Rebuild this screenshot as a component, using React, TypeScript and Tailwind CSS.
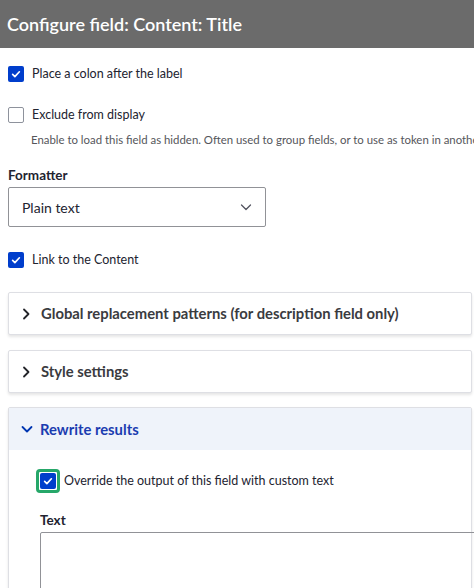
const font = { fontFamily: 'Lato, "Noto Sans", sans-serif' };

function Chevron({ dir, className, w = 1.8 }: { dir: "right" | "down"; className?: string; w?: number }) {
  return dir === "right" ? (
    <svg viewBox="0 0 8 12" className={className} fill="none" stroke="currentColor" strokeWidth={w} strokeLinecap="round" strokeLinejoin="round">
      <path d="M2 1.5l4.5 4.5L2 10.5" />
    </svg>
  ) : (
    <svg viewBox="0 0 12 8" className={className} fill="none" stroke="currentColor" strokeWidth={w} strokeLinecap="round" strokeLinejoin="round">
      <path d="M1.5 2l4.5 4.5L10.5 2" />
    </svg>
  );
}

function Check({ checked, focused }: { checked?: boolean; focused?: boolean }) {
  const box = checked ? (
    <span className="flex h-4 w-4 items-center justify-center rounded-[2px] bg-[#003ecc]">
      <svg viewBox="0 0 16 16" className="h-3 w-3" fill="none" stroke="white" strokeWidth="2.2" strokeLinecap="round" strokeLinejoin="round">
        <path d="M3.5 8.5l3 3 6-6.5" />
      </svg>
    </span>
  ) : (
    <span className="h-4 w-4 rounded-[2px] border border-[#8e929c] bg-white" />
  );
  if (focused)
    return (
      <span className="flex h-6 w-6 shrink-0 items-center justify-center rounded-[4px] border-[3px] border-[#26a769] bg-white">
        {box}
      </span>
    );
  return <span className="flex shrink-0">{box}</span>;
}

function Row({ label, checked }: { label: string; checked?: boolean }) {
  return (
    <div className="flex h-5 items-center gap-2">
      <Check checked={checked} />
      <span className="text-[12.5px] text-[#222330]">{label}</span>
    </div>
  );
}

function Summary({ title }: { title: string }) {
  return (
    <div className="mt-[15px] flex h-[43px] w-[464px] items-center rounded-[2px] border border-[#dedfe4] bg-white pl-[13px] shadow-[0_2px_3px_rgba(0,0,0,0.1)]">
      <Chevron dir="right" className="h-3 w-2 text-[#232429]" />
      <span className="ml-[11px] text-[14.8px] font-bold text-[#3a3b40]">{title}</span>
    </div>
  );
}

export default function App() {
  return (
    <div className="h-[588px] w-[474px] overflow-hidden bg-white" style={font}>
      <div className="flex h-12 items-center bg-[#6b6b6b] pl-[7px]">
        <h1 className="text-[18px] font-semibold text-white">Configure field: Content: Title</h1>
      </div>

      <div className="flex flex-col pl-2">
        <div className="mt-4">
          <Row label="Place a colon after the label" checked />
        </div>
        <div className="mt-[21px]">
          <Row label="Exclude from display" />
        </div>
        <p className="mt-[7px] h-4 whitespace-nowrap pl-[23px] text-[11.4px] leading-4 text-[#55565b]">
          Enable to load this field as hidden. Often used to group fields, or to use as token in another field.
        </p>

        <label className="mt-[18px] h-[18px] text-[13.5px] font-bold leading-[18px] text-[#222330]">Formatter</label>
        <div className="mt-[3px] flex h-10 w-[258px] items-center justify-between rounded-[2px] border border-[#919297] pl-[13px] pr-[13px]">
          <span className="text-[14px] text-[#222330]">Plain text</span>
          <Chevron dir="down" w={1.3} className="h-2 w-3 text-[#545560]" />
        </div>

        <div className="mt-[23px]">
          <Row label="Link to the Content" checked />
        </div>

        <div className="mt-[7px]">
          <Summary title="Global replacement patterns (for description field only)" />
          <Summary title="Style settings" />
        </div>

        <div className="mt-[14px] w-[464px] rounded-[2px] border border-[#dedfe4] bg-white shadow-[0_2px_3px_rgba(0,0,0,0.1)]">
          <div className="flex h-[42px] items-center bg-[#eff3fa] pl-[12px]">
            <Chevron dir="down" className="h-2 w-3 text-[#0036b1]" />
            <span className="ml-[7px] text-[14.8px] font-bold text-[#1b3cb0]">Rewrite results</span>
          </div>
          <div className="flex flex-col pl-[27px] pt-[19px]">
            <div className="flex items-center gap-[4px]">
              <Check checked focused />
              <span className="text-[12.5px] text-[#222330]">Override the output of this field with custom text</span>
            </div>
            <label className="mt-[18px] h-[18px] pl-[4px] text-[13.5px] font-bold leading-[18px] text-[#222330]">Text</label>
            <div className="ml-[4px] mt-[3px] h-[80px] w-[460px] rounded-[2px] border border-[#919297]" />
          </div>
        </div>
      </div>
    </div>
  );
}
